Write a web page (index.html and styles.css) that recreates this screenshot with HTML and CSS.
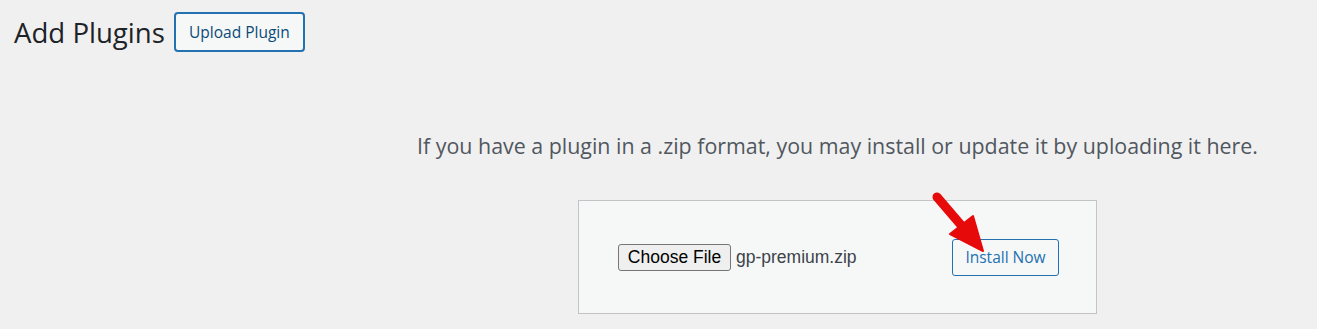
FILE: index.html
```html
<!DOCTYPE html>
<html lang="en">
<head>
<meta charset="utf-8">
<title>Add Plugins</title>
<link rel="stylesheet" href="styles.css">
</head>
<body>
<div class="wrap">
  <div class="head">
    <h1 class="title">Add Plugins</h1>
    <button class="upload-btn" type="button">Upload Plugin</button>
  </div>
  <div class="upload">
    <p class="help">If you have a plugin in a .zip format, you may install or update it by uploading it here.</p>
    <form class="box">
      <div class="file">
        <span class="choose">Choose File</span>
        <span class="fname">gp-premium.zip</span>
      </div>
      <button class="install" type="button">Install Now</button>
    </form>
  </div>
</div>
<svg class="arrow" width="70" height="80" viewBox="0 0 70 80" aria-hidden="true">
  <line x1="7" y1="7" x2="37" y2="42" stroke="#e60a0a" stroke-width="9" stroke-linecap="round"/>
  <polygon points="53,61 20,44 43,26" fill="#e60a0a" stroke="#e60a0a" stroke-width="2" stroke-linejoin="round"/>
</svg>
</body>
</html>
```

FILE: styles.css
```css
html, body {
  margin: 0;
  padding: 0;
  background: #f0f0f1;
}
body {
  position: relative;
  min-height: 329px;
  font-family: "Open Sans", "Noto Sans", sans-serif;
  color: #3c434a;
}
.wrap {
  padding: 12px 0 0 14px;
}
.head {
  display: flex;
  align-items: center;
  gap: 9px;
  height: 40px;
}
.title {
  margin: 0;
  font-size: 27.6px;
  font-weight: 400;
  color: #1d2327;
  line-height: 40px;
}
.upload-btn {
  box-sizing: border-box;
  height: 40px;
  width: 131px;
  padding: 0;
  border: 2px solid #2271b1;
  border-radius: 4px;
  background: #f6f7f7;
  color: #0a4b78;
  font-family: inherit;
  font-size: 15.5px;
}
.upload {
  padding-left: 344px;
  text-align: center;
}
.help {
  margin: 79px 0 0;
  font-size: 21.4px;
  line-height: 30px;
  color: #50575e;
}
.box {
  box-sizing: border-box;
  width: 519px;
  height: 114px;
  margin: 39px auto 0;
  border: 1px solid #c3c4c7;
  background: #f6f7f7;
  display: flex;
  align-items: center;
  justify-content: space-between;
  padding: 0 37px 0 39px;
}
.file {
  display: flex;
  align-items: center;
  gap: 5px;
  font-family: "Liberation Sans", Arial, sans-serif;
  font-size: 17.5px;
}
.choose {
  box-sizing: border-box;
  height: 27px;
  width: 113px;
  display: flex;
  align-items: center;
  justify-content: center;
  border: 1px solid #767676;
  border-radius: 3px;
  background: #efefef;
  color: #000;
}
.fname {
  color: #3c434a;
}
.install {
  box-sizing: border-box;
  height: 37px;
  width: 107px;
  padding: 0;
  border: 1px solid #2271b1;
  border-radius: 3px;
  background: #f6f7f7;
  color: #2271b1;
  font-family: inherit;
  font-size: 15.5px;
}
.arrow {
  position: absolute;
  left: 930px;
  top: 190px;
}
```
